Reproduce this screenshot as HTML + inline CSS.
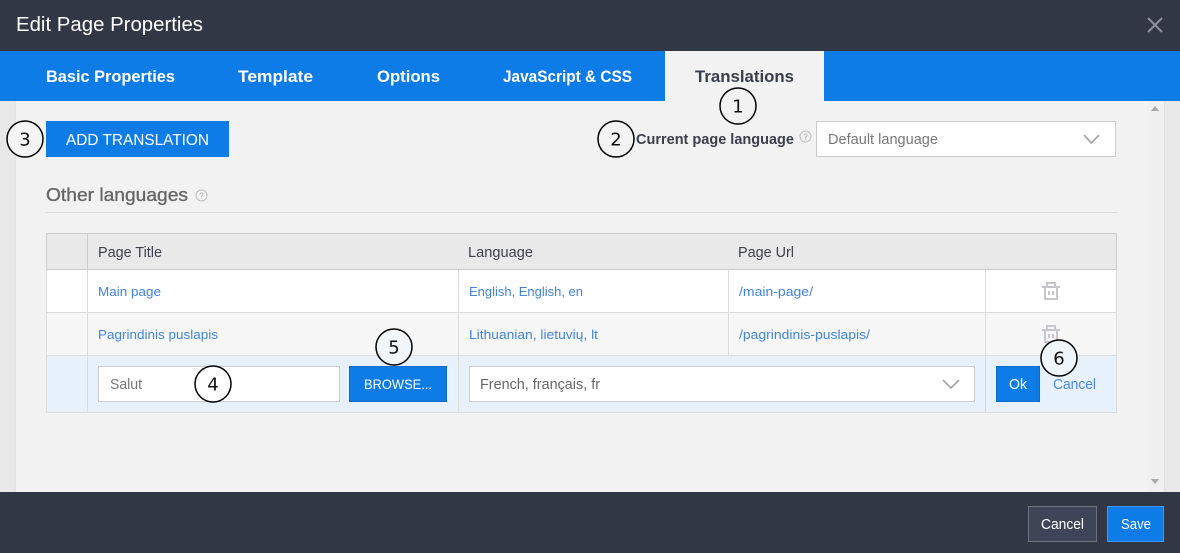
<!DOCTYPE html>
<html><head><meta charset="utf-8"><style>
html,body{margin:0;padding:0;width:1180px;height:553px;overflow:hidden;background:#f2f2f2}
.b{position:absolute;box-sizing:border-box}
svg{position:absolute;left:0;top:0}
text{font-family:"Liberation Sans",sans-serif}
.tab{font-weight:700;font-size:17px;fill:#fff}
.c13{font-size:13px;fill:#3f84e4}
.th{font-size:14.5px;fill:#3d414c}
.num{font-size:18px;fill:#111;text-anchor:middle;font-family:"DejaVu Sans",sans-serif}
</style></head><body>
<div class="b" style="left:0;top:0;width:1180px;height:51px;background:#323746"></div>
<div class="b" style="left:0;top:51px;width:1180px;height:50px;background:#0e7ce6"></div>
<div class="b" style="left:665px;top:51px;width:159px;height:50px;background:#f2f2f2"></div>
<div class="b" style="left:0;top:101px;width:16px;height:391px;background:#e9e8e8;border-right:1px solid #e4e4e4"></div>
<div class="b" style="left:1148px;top:101px;width:16px;height:391px;background:#f0f0f0"></div>
<div class="b" style="left:1164px;top:101px;width:16px;height:391px;background:#e9e8e8;border-left:1px solid #e2e2e2"></div>
<div class="b" style="left:46px;top:121px;width:183px;height:36px;background:#0e7ce6"></div>
<div class="b" style="left:816px;top:121px;width:300px;height:36px;background:#fff;border:1px solid #ccc"></div>
<div class="b" style="left:46px;top:212px;width:1071px;height:1px;background:#ddd"></div>
<div class="b" style="left:46px;top:233px;width:1071px;height:180px;background:#fff;border:1px solid #dcdcdc"></div>
<div class="b" style="left:46px;top:233px;width:1071px;height:37px;background:#e9e9e9;border:1px solid #ccc"></div>
<div class="b" style="left:47px;top:313px;width:1069px;height:42px;background:#f7f7f7"></div>
<div class="b" style="left:47px;top:355px;width:1069px;height:57px;background:#e6f1fb"></div>
<div class="b" style="left:47px;top:312px;width:1069px;height:1px;background:#dcdcdc"></div>
<div class="b" style="left:47px;top:355px;width:1069px;height:1px;background:#dcdcdc"></div>
<div class="b" style="left:87px;top:233px;width:1px;height:37px;background:#ccc"></div>
<div class="b" style="left:87px;top:270px;width:1px;height:143px;background:#dcdcdc"></div>
<div class="b" style="left:458px;top:270px;width:1px;height:143px;background:#dcdcdc"></div>
<div class="b" style="left:728px;top:270px;width:1px;height:85px;background:#dcdcdc"></div>
<div class="b" style="left:985px;top:270px;width:1px;height:143px;background:#dcdcdc"></div>
<div class="b" style="left:98px;top:366px;width:242px;height:36px;background:#fff;border:1px solid #ccc"></div>
<div class="b" style="left:349px;top:366px;width:98px;height:36px;background:#0e7ce6;border:1px solid #0c6cc8"></div>
<div class="b" style="left:469px;top:366px;width:506px;height:36px;background:#fff;border:1px solid #ccc"></div>
<div class="b" style="left:996px;top:366px;width:44px;height:36px;background:#0e7ce6;border:1px solid #0c6cc8"></div>
<div class="b" style="left:0;top:492px;width:1180px;height:61px;background:#323746"></div>
<div class="b" style="left:1028px;top:506px;width:69px;height:36px;background:#3f4559;border:1px solid #6d7283"></div>
<div class="b" style="left:1107px;top:506px;width:57px;height:36px;background:#0e7ce6;border:1px solid #3f97ee"></div>
<svg width="1180" height="553" viewBox="0 0 1180 553">
<text x="16" y="31" font-size="20.5" fill="#fff" textLength="187" lengthAdjust="spacingAndGlyphs">Edit Page Properties</text>
<path d="M1148 18L1162 32M1162 18L1148 32" stroke="#8d919b" stroke-width="2" fill="none"/>
<text class="tab" x="46" y="82" textLength="129" lengthAdjust="spacingAndGlyphs">Basic Properties</text>
<text class="tab" x="238" y="82" textLength="75" lengthAdjust="spacingAndGlyphs">Template</text>
<text class="tab" x="377" y="82" textLength="63" lengthAdjust="spacingAndGlyphs">Options</text>
<text class="tab" x="503" y="82" textLength="129" lengthAdjust="spacingAndGlyphs">JavaScript &amp; CSS</text>
<text class="tab" x="695" y="82" textLength="99" lengthAdjust="spacingAndGlyphs" style="fill:#3a3f4c">Translations</text>
<path d="M1155 106L1151 111H1159Z" fill="#a8a8a8"/>
<path d="M1151 479H1159L1155 484Z" fill="#a8a8a8"/>
<text x="66" y="145" font-size="16" fill="#fff" textLength="143" lengthAdjust="spacingAndGlyphs">ADD TRANSLATION</text>
<text x="636" y="144" font-size="14.5" font-weight="700" fill="#3a3f4c" textLength="158" lengthAdjust="spacingAndGlyphs">Current page language</text>
<g fill="none" stroke="#bdbdbd"><circle cx="805.5" cy="136.5" r="5.5"/><circle cx="201.5" cy="195.5" r="5.5"/></g>
<text x="805.5" y="139.5" font-size="8" fill="#a5a5a5" text-anchor="middle">?</text>
<text x="201.5" y="198.5" font-size="8" fill="#a5a5a5" text-anchor="middle">?</text>
<text x="828" y="144" font-size="14.5" fill="#777" textLength="110" lengthAdjust="spacingAndGlyphs">Default language</text>
<path d="M1084 135L1091.5 143L1099 135" fill="none" stroke="#a9a9a9" stroke-width="1.8"/>
<text x="46" y="201" font-size="18.5" fill="#666" stroke="#666" stroke-width=".35" textLength="142" lengthAdjust="spacingAndGlyphs">Other languages</text>
<text class="th" x="98" y="257" textLength="64" lengthAdjust="spacingAndGlyphs">Page Title</text>
<text class="th" x="468" y="257" textLength="65" lengthAdjust="spacingAndGlyphs">Language</text>
<text class="th" x="738" y="257" textLength="56" lengthAdjust="spacingAndGlyphs">Page Url</text>
<text class="c13" x="98" y="296" textLength="63" lengthAdjust="spacingAndGlyphs">Main page</text>
<text class="c13" x="469" y="296" textLength="114" lengthAdjust="spacingAndGlyphs">English, English, en</text>
<text class="c13" x="739" y="296" textLength="74" lengthAdjust="spacingAndGlyphs">/main-page/</text>
<text class="c13" x="98" y="339" textLength="120" lengthAdjust="spacingAndGlyphs">Pagrindinis puslapis</text>
<text class="c13" x="469" y="339" textLength="129" lengthAdjust="spacingAndGlyphs">Lithuanian, lietuvių, lt</text>
<text class="c13" x="739" y="339" textLength="131" lengthAdjust="spacingAndGlyphs">/pagrindinis-puslapis/</text>
<g fill="none" stroke="#c6c6cc" stroke-width="2">
<path d="M1042 287H1060M1047 287V283H1055V287M1045 287V299H1057V287M1049 291V295M1053 291V295"/>
</g>
<g fill="none" stroke="#c6c6cc" stroke-width="2" transform="translate(0 43)">
<path d="M1042 287H1060M1047 287V283H1055V287M1045 287V299H1057V287M1049 291V295M1053 291V295"/>
</g>
<text x="110" y="389" font-size="14.5" fill="#777" textLength="32" lengthAdjust="spacingAndGlyphs">Salut</text>
<text x="364" y="389" font-size="14" fill="#fff" textLength="68" lengthAdjust="spacingAndGlyphs">BROWSE...</text>
<text x="480" y="389" font-size="14.5" fill="#666" textLength="120" lengthAdjust="spacingAndGlyphs">French, français, fr</text>
<path d="M943 380L951 388L959 380" fill="none" stroke="#a9a9a9" stroke-width="1.8"/>
<text x="1009" y="389" font-size="14.5" fill="#fff" textLength="18" lengthAdjust="spacingAndGlyphs">Ok</text>
<text x="1053" y="389" font-size="14.5" fill="#4a86e8" textLength="43" lengthAdjust="spacingAndGlyphs">Cancel</text>
<text x="1041" y="529" font-size="14.5" fill="#fff" textLength="43" lengthAdjust="spacingAndGlyphs">Cancel</text>
<text x="1121" y="529" font-size="14.5" fill="#fff" textLength="30" lengthAdjust="spacingAndGlyphs">Save</text>
<g stroke="#000" stroke-width="1.5">
<circle cx="738" cy="106" r="18" fill="#f2f2f2"/>
<circle cx="616" cy="139" r="18" fill="#f3f3f3"/>
<circle cx="25" cy="139" r="18" fill="#f4f4f4"/>
<circle cx="213" cy="384" r="18" fill="#fff"/>
<circle cx="394" cy="347" r="18" fill="#f1f6fb"/>
<circle cx="1059" cy="358" r="18" fill="#eef5fb"/>
</g>
<text class="num" x="738" y="112.500">1</text>
<text class="num" x="616" y="145.500">2</text>
<text class="num" x="25" y="145.500">3</text>
<text class="num" x="213" y="390.500">4</text>
<text class="num" x="394" y="353.500">5</text>
<text class="num" x="1059" y="364.500">6</text>
</svg>
</body></html>
